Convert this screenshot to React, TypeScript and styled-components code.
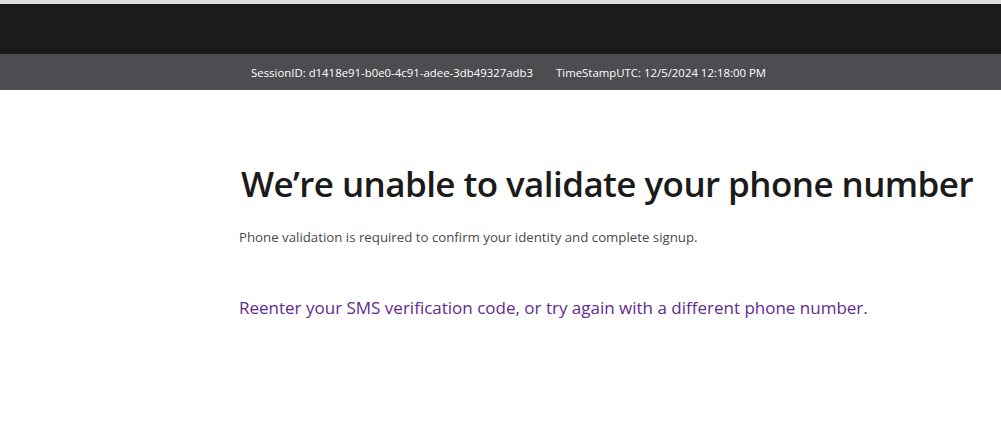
import React from "react";
import styled, { createGlobalStyle } from "styled-components";

const Global = createGlobalStyle`
  html, body { margin: 0; padding: 0; background: #fff; }
  body { font-family: "Open Sans", "Noto Sans", sans-serif; }
`;

const Page = styled.div`
  display: flex;
  flex-direction: column;
  width: 1001px;
  min-height: 446px;
`;

const TopStrip = styled.div`
  height: 4px;
  background: #dedede;
`;

const Banner = styled.div`
  height: 50px;
  background: #1b1b1b;
`;

const InfoBar = styled.div`
  height: 36px;
  background: #4d4c50;
  display: flex;
  align-items: center;
  justify-content: center;
  gap: 23px;
  padding-left: 16px;
  color: #fff;
  font-size: 11.4px;
`;

const InfoItem = styled.span`
  white-space: nowrap;
`;

const Content = styled.main`
  display: flex;
  flex-direction: column;
  align-items: flex-start;
  padding: 70px 0 0 239px;
`;

const Title = styled.h1`
  margin: 0;
  font-size: 35px;
  letter-spacing: -0.58px;
  font-weight: 600;
  color: #1b1b1b;
  line-height: 48px;
  padding-left: 2px;
  white-space: nowrap;
`;

const Desc = styled.p`
  margin: 19px 0 0;
  font-size: 13.25px;
  color: #4a4a4a;
  line-height: 20px;
`;

const Action = styled.a`
  margin-top: 49px;
  font-size: 17px;
  color: #632a8f;
  text-decoration: none;
  line-height: 24px;
`;

export default function App() {
  return (
    <Page>
      <Global />
      <TopStrip />
      <Banner />
      <InfoBar>
        <InfoItem>SessionID: d1418e91-b0e0-4c91-adee-3db49327adb3</InfoItem>
        <InfoItem>TimeStampUTC: 12/5/2024 12:18:00 PM</InfoItem>
      </InfoBar>
      <Content>
        <Title>We’re unable to validate your phone number</Title>
        <Desc>Phone validation is required to confirm your identity and complete signup.</Desc>
        <Action href="#">Reenter your SMS verification code, or try again with a different phone number.</Action>
      </Content>
    </Page>
  );
}
